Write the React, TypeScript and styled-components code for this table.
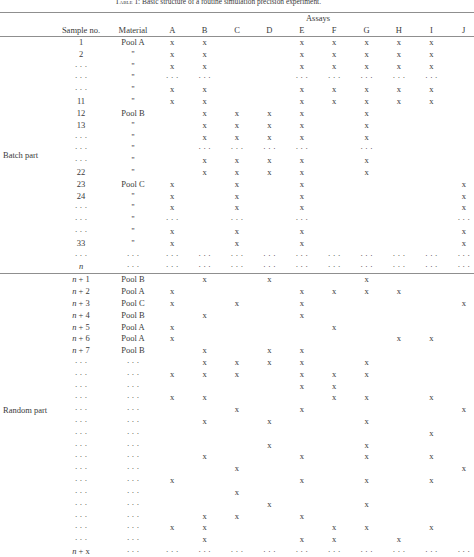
import React from "react";
import styled, { createGlobalStyle, css } from "styled-components";

const GlobalStyle = createGlobalStyle`
  html, body { margin: 0; padding: 0; background: #ffffff; overflow: hidden; }
  body { font-family: "Liberation Serif", "Times New Roman", serif; color: #3a3a3a; }
`;

const Page = styled.div`
  width: 474px;
  height: 557px;
  overflow: hidden;
`;

const Caption = styled.div`
  margin-top: -4px;
  margin-bottom: 4px;
  height: 12px;
  line-height: 12px;
  padding-left: 115px;
  font-size: 7.4px;
  white-space: nowrap;
`;

const SmallCaps = styled.span`
  font-variant: small-caps;
`;

const Table = styled.table`
  width: 480px;
  table-layout: fixed;
  border-collapse: separate;
  border-spacing: 0;
  font-size: 8.5px;
  border-top: 1.5px solid #8f8f8f;
`;

const AssaysHead = styled.th`
  height: 11.5px;
  line-height: 11.5px;
  padding: 0;
  font-weight: normal;
  text-align: center;
`;

const HeadCell = styled.th<{ $shift?: number }>`
  height: 11.5px;
  line-height: 11.5px;
  padding: 0 0 0 ${(p) => p.$shift ?? 0}px;
  font-weight: normal;
  text-align: center;
  white-space: nowrap;
  border-bottom: 1px solid #8f8f8f;
`;

const Blank = styled.th`
  padding: 0;
`;

const ruleCss = css`
  border-top: 1.5px solid #8f8f8f;
`;

const GroupLabel = styled.td<{ $divider?: boolean }>`
  padding: 0 0 0 3px;
  text-align: left;
  vertical-align: middle;
  white-space: nowrap;
  ${(p) => p.$divider && ruleCss}
`;

const Cell = styled.td<{ $divider?: boolean; $shift?: number }>`
  height: 11.82px;
  line-height: 11.82px;
  padding: 0 0 0 ${(p) => p.$shift ?? 0}px;
  text-align: center;
  white-space: nowrap;
  ${(p) => p.$divider && ruleCss}
`;

const Italic = styled.i`
  font-style: italic;
`;

type RowData = { sample: string; material: string; marks: string };

const DOTS = "· · ·";
const LETTERS = ["A", "B", "C", "D", "E", "F", "G", "H", "I", "J"];

const batch: RowData[] = [
  { sample: "1", material: "Pool A", marks: "xx  xxxxx " },
  { sample: "2", material: "''", marks: "xx  xxxxx " },
  { sample: "...", material: "''", marks: "xx  xxxxx " },
  { sample: "...", material: "''", marks: "..  ..... " },
  { sample: "...", material: "''", marks: "xx  xxxxx " },
  { sample: "11", material: "''", marks: "xx  xxxxx " },
  { sample: "12", material: "Pool B", marks: " xxxx x   " },
  { sample: "13", material: "''", marks: " xxxx x   " },
  { sample: "...", material: "''", marks: " xxxx x   " },
  { sample: "...", material: "''", marks: " .... .   " },
  { sample: "...", material: "''", marks: " xxxx x   " },
  { sample: "22", material: "''", marks: " xxxx x   " },
  { sample: "23", material: "Pool C", marks: "x x x    x" },
  { sample: "24", material: "''", marks: "x x x    x" },
  { sample: "...", material: "''", marks: "x x x    x" },
  { sample: "...", material: "''", marks: ". . .    ." },
  { sample: "...", material: "''", marks: "x x x    x" },
  { sample: "33", material: "''", marks: "x x x    x" },
  { sample: "...", material: "...", marks: ".........." },
  { sample: "n", material: "...", marks: ".........." },
];

const random: RowData[] = [
  { sample: "n + 1", material: "Pool B", marks: " x x  x   " },
  { sample: "n + 2", material: "Pool A", marks: "x   xxxx  " },
  { sample: "n + 3", material: "Pool C", marks: "x x x    x" },
  { sample: "n + 4", material: "Pool B", marks: " x  x     " },
  { sample: "n + 5", material: "Pool A", marks: "x    x    " },
  { sample: "n + 6", material: "Pool A", marks: "x      xx " },
  { sample: "n + 7", material: "Pool B", marks: " x xx     " },
  { sample: "...", material: "...", marks: " xxxx x   " },
  { sample: "...", material: "...", marks: "xxx xxx   " },
  { sample: "...", material: "...", marks: "    xx    " },
  { sample: "...", material: "...", marks: "xx   xx x " },
  { sample: "...", material: "...", marks: "  x x    x" },
  { sample: "...", material: "...", marks: " x x  x   " },
  { sample: "...", material: "...", marks: "        x " },
  { sample: "...", material: "...", marks: "   x  x   " },
  { sample: "...", material: "...", marks: " x  x x x " },
  { sample: "...", material: "...", marks: "  x      x" },
  { sample: "...", material: "...", marks: "x   x x x " },
  { sample: "...", material: "...", marks: "  x       " },
  { sample: "...", material: "...", marks: "   x  x   " },
  { sample: "...", material: "...", marks: " xx x     " },
  { sample: "...", material: "...", marks: "xx   xx x " },
  { sample: "...", material: "...", marks: " x  xx x  " },
  { sample: "n + x", material: "...", marks: ".........." },
];

function renderText(value: string): React.ReactNode {
  if (value === "...") return DOTS;
  if (value.startsWith("n")) {
    return (
      <>
        <Italic>n</Italic>
        {value.slice(1)}
      </>
    );
  }
  return value;
}

function renderMark(ch: string): string {
  if (ch === "x") return "x";
  if (ch === ".") return DOTS;
  return "";
}

type GroupProps = {
  rows: RowData[];
  label: string;
  span: number;
  divider?: boolean;
  keyPrefix: string;
};

function Group({ rows, label, span, divider, keyPrefix }: GroupProps) {
  return (
    <>
      {rows.map((row, i) => {
        const rule = divider && i === 0;
        return (
          <tr key={`${keyPrefix}-${i}`}>
            {i === 0 && (
              <GroupLabel rowSpan={span} $divider={rule}>
                {label}
              </GroupLabel>
            )}
            {i >= span && <Cell />}
            <Cell $divider={rule}>{renderText(row.sample)}</Cell>
            <Cell $divider={rule} $shift={6}>
              {renderText(row.material)}
            </Cell>
            {row.marks.split("").map((ch, j) => (
              <Cell key={j} $divider={rule}>
                {renderMark(ch)}
              </Cell>
            ))}
          </tr>
        );
      })}
    </>
  );
}

export default function App() {
  return (
    <Page>
      <GlobalStyle />
      <Caption>
        <SmallCaps>Table</SmallCaps> 1: Basic structure of a routine simulation precision experiment.
      </Caption>
      <Table>
        <colgroup>
          <col style={{ width: 58 }} />
          <col style={{ width: 46 }} />
          <col style={{ width: 52 }} />
          {LETTERS.map((l) => (
            <col key={l} style={{ width: 32.4 }} />
          ))}
        </colgroup>
        <thead>
          <tr>
            <Blank />
            <Blank />
            <Blank />
            <AssaysHead colSpan={10}>Assays</AssaysHead>
          </tr>
          <tr>
            <HeadCell />
            <HeadCell>Sample no.</HeadCell>
            <HeadCell $shift={6}>Material</HeadCell>
            {LETTERS.map((l) => (
              <HeadCell key={l}>{l}</HeadCell>
            ))}
          </tr>
        </thead>
        <tbody>
          <Group rows={batch} label="Batch part" span={20} keyPrefix="b" />
          <Group rows={random} label="Random part" span={23} divider keyPrefix="r" />
        </tbody>
      </Table>
    </Page>
  );
}
